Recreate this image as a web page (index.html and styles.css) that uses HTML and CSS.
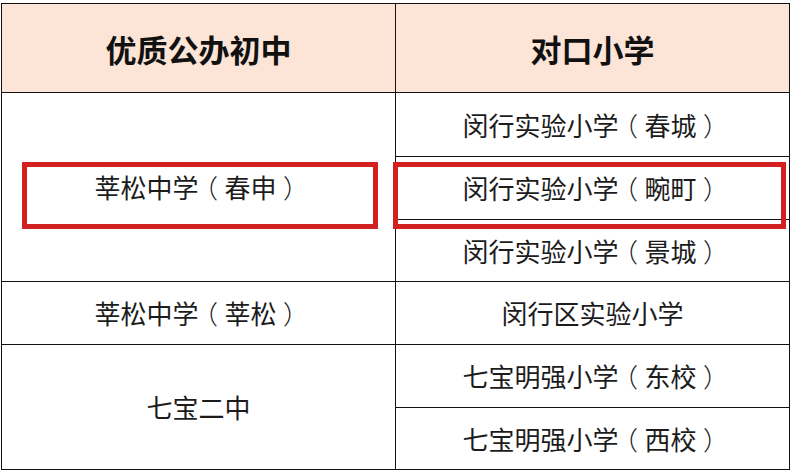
FILE: index.html
```html
<!DOCTYPE html>
<html lang="zh-CN">
<head>
<meta charset="utf-8">
<link rel="stylesheet" href="styles.css">
</head>
<body>
<div class="table">
  <div class="cell head">优质公办初中</div>
  <div class="cell head">对口小学</div>
  <div class="cell span3">莘松中学<span class="p">（</span>春申<span class="p">）</span></div>
  <div class="cell">闵行实验小学<span class="p">（</span>春城<span class="p">）</span></div>
  <div class="cell">闵行实验小学<span class="p">（</span>畹町<span class="p">）</span></div>
  <div class="cell">闵行实验小学<span class="p">（</span>景城<span class="p">）</span></div>
  <div class="cell">莘松中学<span class="p">（</span>莘松<span class="p">）</span></div>
  <div class="cell">闵行区实验小学</div>
  <div class="cell span2">七宝二中</div>
  <div class="cell">七宝明强小学<span class="p">（</span>东校<span class="p">）</span></div>
  <div class="cell">七宝明强小学<span class="p">（</span>西校<span class="p">）</span></div>
</div>
<div class="mark mark-left"></div>
<div class="mark mark-right"></div>
</body>
</html>
```
FILE: styles.css
```css
html, body {
  margin: 0;
  padding: 0;
  background: #ffffff;
}
body {
  width: 794px;
  height: 475px;
  overflow: hidden;
  position: relative;
  font-family: "Noto Sans CJK SC", "Noto Sans", sans-serif;
}
.table {
  margin: 3px 0 0 1px;
  width: 787px;
  display: grid;
  grid-template-columns: 393px 393px;
  grid-template-rows: 88px 63px 62px 61px 62px 62px 61px;
  gap: 1px;
  padding: 1px;
  background: #111111;
}
.cell {
  background: #ffffff;
  display: flex;
  align-items: center;
  justify-content: center;
  font-size: 26px;
  color: #1c1c1c;
  line-height: 1;
  white-space: pre;
}
.p {
  font-feature-settings: "halt" 1;
  font-weight: 300;
  padding: 0 0.25em;
}
.head {
  background: #fce4d6;
  font-size: 31px;
  font-weight: 700;
  color: #111111;
}
.span3 {
  grid-row: span 3;
}
.span2 {
  grid-row: span 2;
}
.mark {
  position: absolute;
  border: 5px solid #d21f1f;
  box-sizing: border-box;
}
.mark-left {
  left: 22px;
  top: 162px;
  width: 356px;
  height: 67px;
}
.mark-right {
  left: 393px;
  top: 162px;
  width: 393px;
  height: 67px;
}
```
